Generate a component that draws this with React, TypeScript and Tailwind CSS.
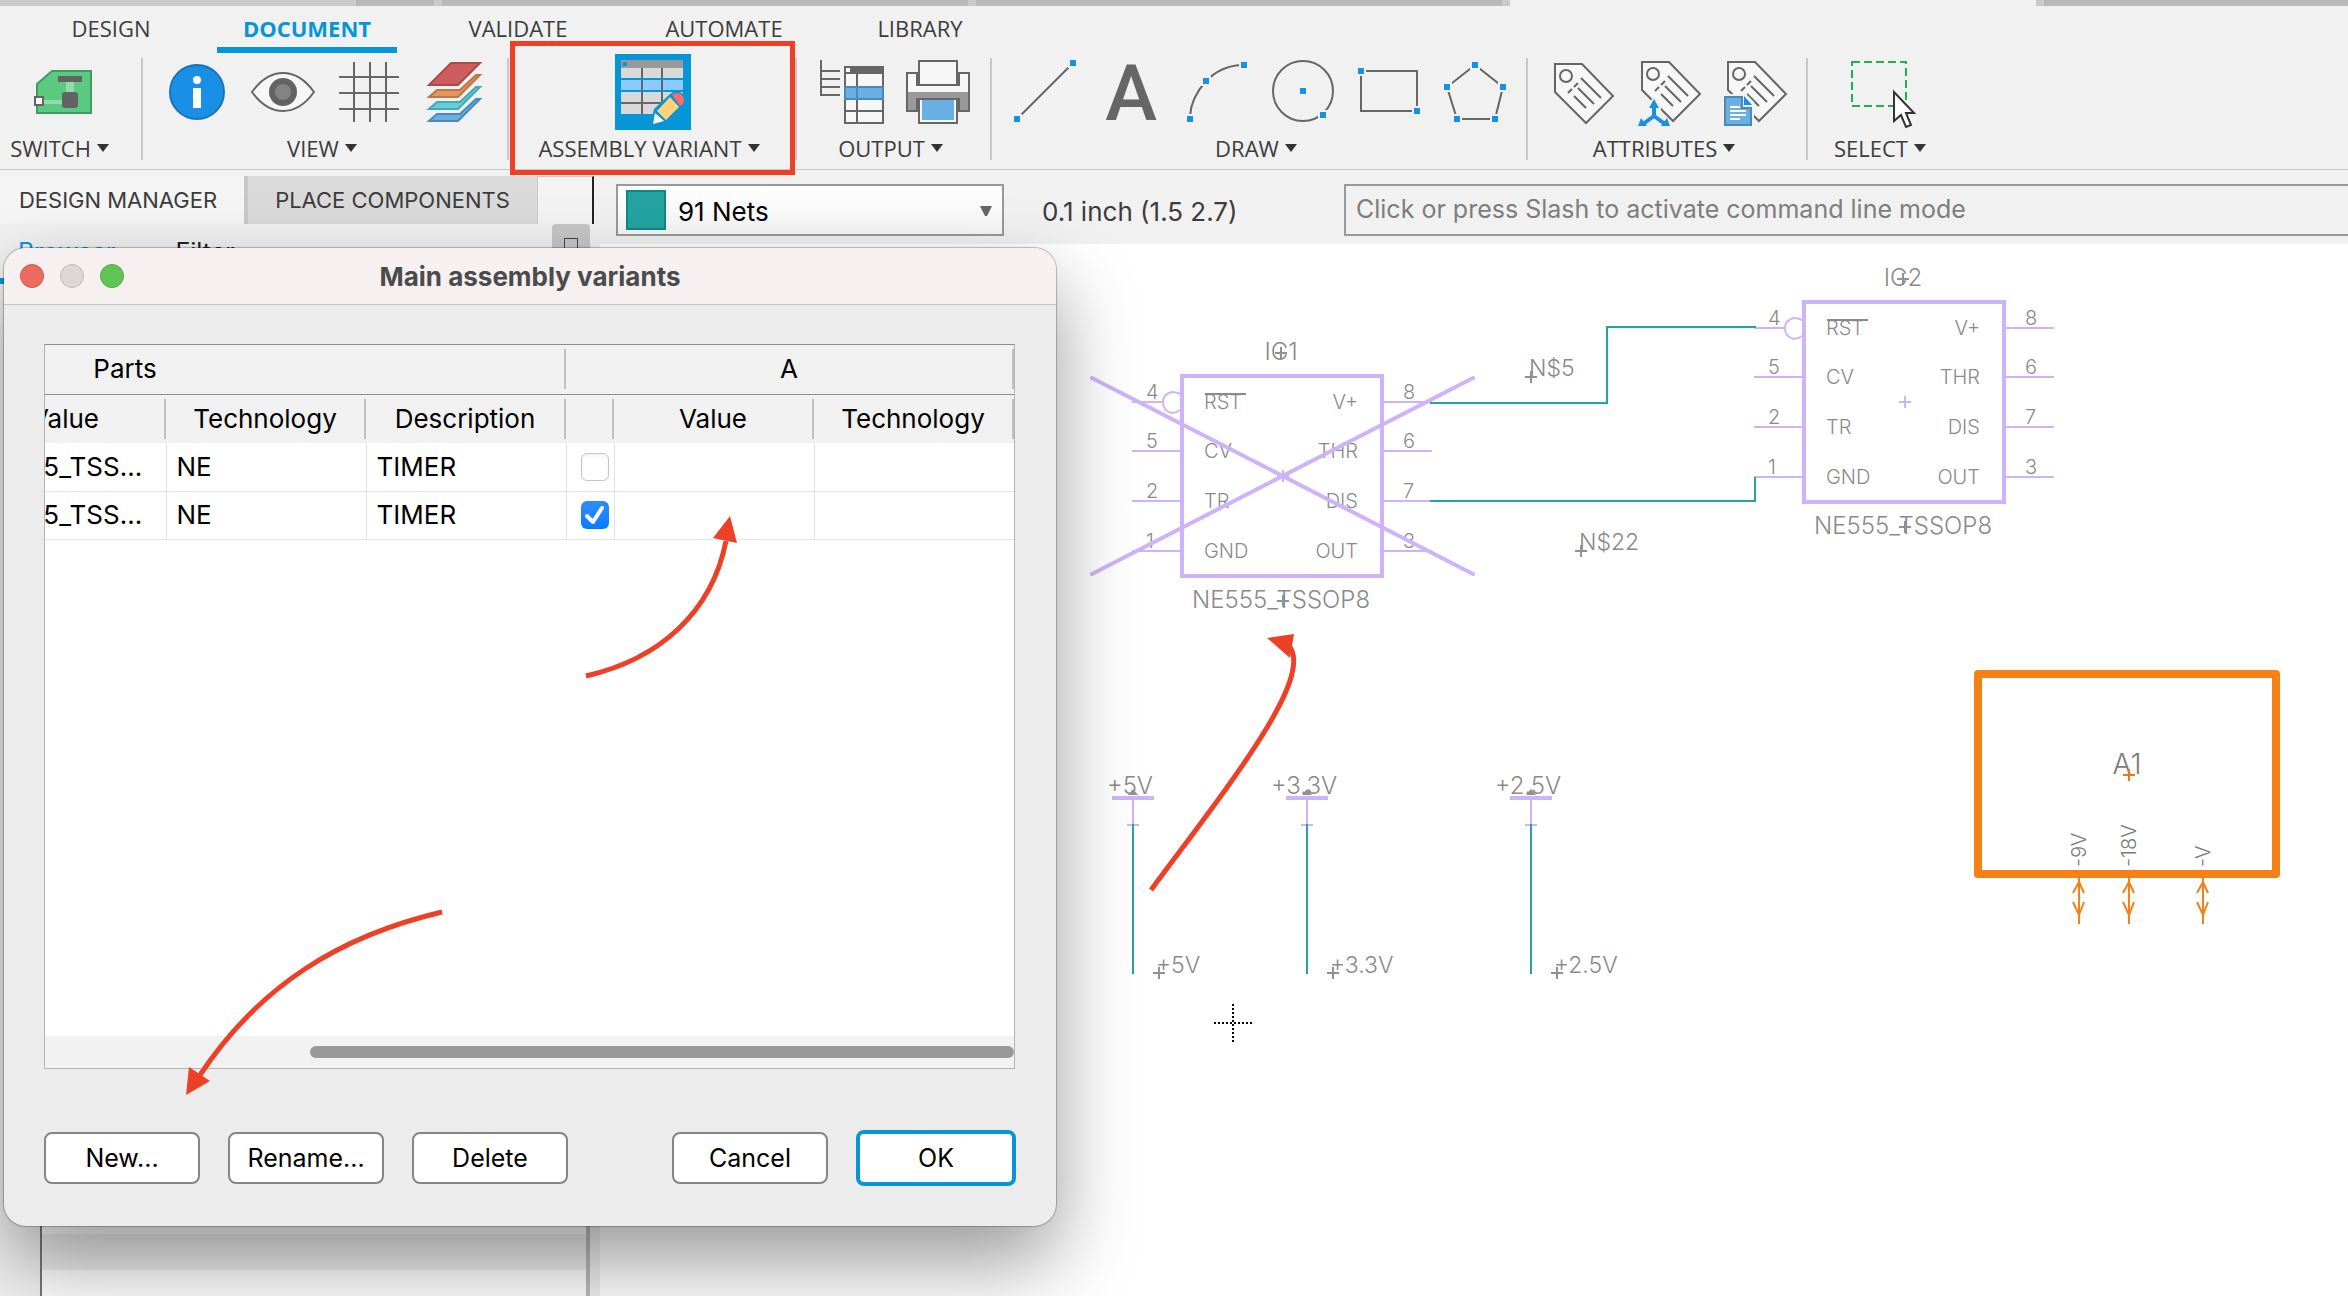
import type { ReactNode } from "react";

const IconBox = ({ children }: { children: ReactNode }) => (
  <svg width="76" height="76" viewBox="0 0 76 76" fill="none">
    {children}
  </svg>
);

/* Small blue drag handle with a clear margin around it */
const Handle = ({ x, y }: { x: number; y: number }) => (
  <>
    <rect x={x - 5} y={y - 5} width="10" height="10" fill="#f1f1f1" />
    <rect x={x - 3} y={y - 3} width="6" height="6" fill="#1a8fe6" />
  </>
);

const SwitchIcon = () => (
  <IconBox>
    <path d="M11 59V30L26 17H65V59Z" fill="#5bc97f" stroke="#3f9e5f" strokeWidth="2" />
    <path d="M40 28h8v12h-8zM18 46h20v4H18z" fill="#93dbab" />
    <rect x="32" y="22" width="24" height="6" fill="#636363" />
    <rect x="36" y="38" width="16" height="16" rx="3" fill="#636363" />
    <rect x="9" y="43" width="8" height="8" fill="#fff" stroke="#636363" strokeWidth="2" />
  </IconBox>
);

const InfoIcon = () => (
  <IconBox>
    <circle cx="38" cy="38" r="27" fill="#1a8fe6" stroke="#1a73ba" strokeWidth="2" />
    <circle cx="38" cy="26" r="4" fill="#fff" />
    <rect x="34" y="34" width="8" height="20" fill="#fff" />
  </IconBox>
);

const EyeIcon = () => (
  <IconBox>
    <path
      d="M7 38C17 24 28 19 38 19S59 24 69 38C59 52 48 57 38 57S17 52 7 38Z"
      fill="#f7f7f7"
      stroke="#666"
      strokeWidth="2"
    />
    <circle cx="38" cy="38" r="14" fill="#636363" />
    <circle cx="38" cy="38" r="8" fill="#838383" />
  </IconBox>
);

const GridIcon = () => (
  <IconBox>
    <path
      d="M23 8V68M39 8V68M55 8V68M8 23H68M8 39H68M8 55H68"
      stroke="#666"
      strokeWidth="2"
    />
  </IconBox>
);

const LayersIcon = () => (
  <IconBox>
    <path d="M12 31H41L63 9H34Z" fill="#cd5c5c" stroke="#a84a4c" strokeWidth="2" />
    <path d="M12 43H41L63 21H59L43 36H20Z" fill="#e5965f" stroke="#bd7645" strokeWidth="2" />
    <path d="M12 55H41L63 33H59L43 48H20Z" fill="#63cfd8" stroke="#45a9b2" strokeWidth="2" />
    <path d="M12 67H41L63 45H59L43 60H20Z" fill="#68afe6" stroke="#4a8ab8" strokeWidth="2" />
  </IconBox>
);

const VariantIcon = () => (
  <IconBox>
    <rect width="76" height="76" fill="#0696d7" />
    <rect x="6" y="6" width="62" height="8" fill="#999" />
    <rect x="8" y="8" width="4" height="4" fill="#0696d7" />
    <path d="M6 14h62v10H6zM6 38h62v22H6z" fill="#d9d9d9" />
    <rect x="6" y="26" width="62" height="10" fill="#8ccbff" />
    <path d="M27 14v10M27 26v10M27 38v22M47 14v10M47 26v10M47 38v22M6 49h62" stroke="#666" strokeWidth="2" />
    <path d="M34 76L39 55L55 40Q62 34 69 41V76Z" fill="#0696d7" />
    <path d="M57 41Q62 37 67 41Q71 46 67 51L65 52Z" fill="#ff6a6a" />
    <path d="M55 43L64 53L51 66L42 57Z" fill="#ffd37a" />
    <path d="M40 59L49 67L38 70Z" fill="#fff" />
  </IconBox>
);

const BomIcon = () => (
  <IconBox>
    <path d="M7 6V42M7 17H26M7 25H26M7 33H26M7 41H26" stroke="#666" strokeWidth="2" />
    <rect x="31" y="13" width="38" height="56" fill="#f7f7f7" stroke="#666" strokeWidth="2" />
    <rect x="30" y="12" width="40" height="8" fill="#666" />
    <rect x="32" y="14" width="4" height="4" fill="#fff" />
    <path d="M43 20V69M31 57H69" stroke="#666" strokeWidth="2" />
    <rect x="31" y="33" width="38" height="12" fill="#68afe6" stroke="#4a8ab8" strokeWidth="2" />
    <path d="M43 33v12" stroke="#4a8ab8" strokeWidth="2" />
  </IconBox>
);

const PrinterIcon = () => (
  <IconBox>
    <rect x="7" y="19" width="62" height="38" fill="#f7f7f7" stroke="#666" strokeWidth="2" />
    <rect x="8" y="38" width="60" height="18" fill="#999" />
    <path d="M16 18h44v14H16z" fill="#666" />
    <rect x="19" y="7" width="38" height="24" fill="#f7f7f7" stroke="#666" strokeWidth="2" />
    <path d="M16 44h44v14H16z" fill="#666" />
    <rect x="19" y="45" width="38" height="24" fill="#f7f7f7" stroke="#666" strokeWidth="2" />
    <rect x="22" y="46" width="32" height="20" fill="#68afe6" />
  </IconBox>
);

const LineIcon = () => (
  <IconBox>
    <path d="M10 65L66 9" stroke="#666" strokeWidth="2" />
    <Handle x={10} y={65} />
    <Handle x={66} y={9} />
  </IconBox>
);

const TextIcon = () => (
  <svg width="76" height="76" viewBox="0 0 76 76" className="overflow-visible">
    <text x="38" y="66" textAnchor="middle" className="fill-[#666] font-['Roboto'] text-[78px] font-medium">
      A
    </text>
  </svg>
);

const ArcIcon = () => (
  <IconBox>
    <path d="M11 62Q12 44 27 27Q42 12 62 11" stroke="#666" strokeWidth="2" />
    <Handle x={11} y={65} />
    <Handle x={27} y={27} />
    <Handle x={65} y={11} />
  </IconBox>
);

const CircleIcon = () => (
  <IconBox>
    <circle cx="38" cy="37" r="30" stroke="#666" strokeWidth="2" />
    <Handle x={38} y={37} />
    <Handle x={58} y={61} />
  </IconBox>
);

const RectIcon = () => (
  <IconBox>
    <rect x="10" y="17" width="56" height="40" stroke="#666" strokeWidth="2" />
    <Handle x={10} y={17} />
    <Handle x={66} y={57} />
  </IconBox>
);

const PolygonIcon = () => (
  <IconBox>
    <path d="M38 11L66 33L58 65H20L10 33Z" stroke="#666" strokeWidth="2" />
    <Handle x={38} y={11} />
    <Handle x={66} y={33} />
    <Handle x={58} y={65} />
    <Handle x={20} y={65} />
    <Handle x={10} y={33} />
  </IconBox>
);

const Tag = () => (
  <g stroke="#666" strokeWidth="2">
    <path d="M11 10H38L69 42L42 69L11 38Z" fill="#f7f7f7" />
    <circle cx="22" cy="22" r="6" />
    <path d="M37 24L57 44M34 34L50 50M30 42L42 54M34 29L30 33M28 35L24 39" />
  </g>
);

const TagIcon = () => (
  <IconBox>
    <Tag />
  </IconBox>
);

const TagGlobalIcon = () => (
  <IconBox>
    <g transform="translate(1 -2)">
      <Tag />
    </g>
    <path d="M24 42L31 52V60L43 70V76H5V70L17 60V52Z" fill="#f1f1f1" />
    <path d="M24 50V63M24 62L13 70M24 62L35 70" stroke="#1a8fe6" strokeWidth="4" />
    <path d="M24 45l5 9H19zM8 72l3-8 6 8zM40 72l-3-8-6 8z" fill="#1a8fe6" />
  </IconBox>
);

const TagTextIcon = () => (
  <IconBox>
    <g transform="translate(1 -2)">
      <Tag />
    </g>
    <path d="M6 40H30L38 48V74H6Z" fill="#f1f1f1" />
    <path d="M9 43H26V54H35V71H9Z" fill="#68afe6" stroke="#4a8ab8" strokeWidth="2" />
    <path d="M28 42L36 51H28Z" fill="#1a8fe6" />
    <path d="M14 53H24M14 57H30M14 61H30M14 65H24" stroke="#fff" strokeWidth="2" />
  </IconBox>
);

const SelectIcon = () => (
  <IconBox>
    <rect x="6" y="8" width="54" height="44" stroke="#22b14c" strokeWidth="2" strokeDasharray="8 4" />
    <path
      d="M48 38V67L55 61L60 73L65 71L60 59H68Z"
      fill="#fff"
      stroke="#333"
      strokeWidth="2"
    />
  </IconBox>
);

const tabs = [
  { label: "DESIGN", width: "w-[124px]" },
  { label: "DOCUMENT", width: "w-[180px]", active: true },
  { label: "VALIDATE", width: "w-[154px]" },
  { label: "AUTOMATE", width: "w-[170px]" },
  { label: "LIBRARY", width: "w-[134px]" },
];

const groups = [
  { label: "SWITCH", width: "w-[143px] pr-4", icons: [SwitchIcon] },
  { label: "VIEW", width: "w-[366px]", icons: [InfoIcon, EyeIcon, GridIcon, LayersIcon] },
  { label: "ASSEMBLY VARIANT", width: "w-[288px]", icons: [VariantIcon] },
  { label: "OUTPUT", width: "w-[195px]", icons: [BomIcon, PrinterIcon] },
  {
    label: "DRAW",
    width: "w-[536px]",
    icons: [LineIcon, TextIcon, ArcIcon, CircleIcon, RectIcon, PolygonIcon],
  },
  { label: "ATTRIBUTES", width: "w-[280px]", icons: [TagIcon, TagGlobalIcon, TagTextIcon] },
  { label: "SELECT", width: "w-[152px]", icons: [SelectIcon], last: true },
];

const WindowTabs = () => (
  <div className="flex h-1.5 gap-2 bg-[#cacaca]">
    <div className="w-[348px]" />
    <div className="w-[78px] bg-[#b9b9b9]" />
    <div className="w-[526px] bg-[#b9b9b9]" />
    <div className="w-[526px] bg-[#b9b9b9]" />
    <div className="w-[526px] bg-[#f1f1f1]" />
    <div className="flex-1 bg-[#b9b9b9]" />
  </div>
);

const Ribbon = () => (
  <header className="border-b border-[#c8c8c8] font-['Open_Sans',sans-serif] text-[22px] font-medium text-[#3c3c3c]">
    <nav className="flex h-12 gap-11 pl-[49px]">
      {tabs.map((tab) => (
        <a
          key={tab.label}
          href="#"
          className={`${tab.width} flex h-[47px] items-center justify-center border-b-6 pt-0.5 leading-none ${
            tab.active ? "border-[#0696d7] font-bold text-[#0696d7]" : "border-transparent"
          }`}
        >
          {tab.label}
        </a>
      ))}
    </nav>
    <div className="flex h-[115px]">
      {groups.map((group) => (
        <section
          key={group.label}
          className={`${group.width} relative flex shrink-0 flex-col items-center`}
        >
          <div className="flex gap-2.5">
            {group.icons.map((Icon, i) => (
              <button key={i} type="button" aria-label={group.label}>
                <Icon />
              </button>
            ))}
          </div>
          <button type="button" className="flex h-9 items-center gap-1.5 pr-2 leading-none">
            {group.label}
            <svg width="12" height="8" viewBox="0 0 12 8">
              <path d="M0 0H12L6 8Z" fill="#333" />
            </svg>
          </button>
          {!group.last && <span className="absolute right-0 top-1 h-[102px] w-0.5 bg-[#c8c8c8]" />}
        </section>
      ))}
    </div>
  </header>
);

const SidePanel = () => (
  <aside className="flex w-[600px] shrink-0 flex-col bg-[#f1f1f1]">
    <div className="flex h-12 text-[22px] leading-none text-[#3c3c3c]">
      <button type="button" className="w-[244px] bg-[#f5f5f5] pr-2">
        DESIGN MANAGER
      </button>
      <button type="button" className="w-[294px] border-l-4 border-r border-[#c8c8c8] bg-[#dadada]">
        PLACE COMPONENTS
      </button>
      <div className="w-14 border-r-2 border-t border-r-[#222] border-t-[#c8c8c8] bg-[#f3f3f3]" />
    </div>
    <div className="flex h-[54px] items-start justify-between pl-[18px] pr-2.5 text-[25px] leading-7">
      <div className="flex gap-15 pt-3.5">
        <a href="#" className="text-[#0696d7]">
          Browser
        </a>
        <a href="#" className="text-[#222]">
          Filter
        </a>
      </div>
      <span className="flex h-10 w-[38px] justify-center rounded-t bg-[#c6c6c6] pt-3.5">
        <span className="h-5 w-3.5 border border-[#444]" />
      </span>
    </div>
    <div className="h-1.5 w-[120px] bg-[#0696d7]" />
    <div className="ml-10 mr-2.5 flex flex-1 flex-col justify-end border-l-2 border-r-4 border-l-[#777] border-r-[#bbb] bg-white">
      <div className="h-9 bg-[#f0f0f0]" />
      <div className="h-[26px]" />
    </div>
  </aside>
);

const CommandBar = () => (
  <div className="flex h-[68px] items-start pl-4 pt-2 text-[26px] text-[#3c3c3c]">
    <div className="relative h-[52px] w-[388px] border-2 border-[#999] bg-linear-to-b from-white to-[#f6f6f6]">
      <span className="absolute left-2 top-1 h-10 w-10 border-2 border-[#0b8989] bg-[#24a3a0]" />
      <select
        aria-label="Layer"
        className="h-full w-full appearance-none bg-transparent pl-[60px] pt-0.5 text-black outline-none"
      >
        <option>91 Nets</option>
      </select>
      <svg className="absolute right-2.5 top-5" width="12" height="10" viewBox="0 0 12 10">
        <path d="M0 0H12L7 10H5Z" fill="#666" />
      </svg>
    </div>
    <span className="ml-[38px] w-[302px] pt-0.5 leading-[52px]">0.1 inch (1.5 2.7)</span>
    <input
      type="text"
      aria-label="Command line"
      placeholder="Click or press Slash to activate command line mode"
      className="h-[52px] min-w-0 flex-1 border-2 border-r-0 border-[#999] bg-[#f1f1f1] px-2.5 pb-0.5 text-[25px] outline-none placeholder:text-[#7d7d7d]"
    />
  </div>
);

const Cross = ({ x, y, color = "#919191" }: { x: number; y: number; color?: string }) => (
  <path d={`M${x - 6} ${y}H${x + 6}M${x} ${y - 6}V${y + 6}`} stroke={color} strokeWidth="2" />
);

const pins = [
  { y: 402, left: "4", leftName: "RST", right: "8", rightName: "V+" },
  { y: 451, left: "5", leftName: "CV", right: "6", rightName: "THR" },
  { y: 501, left: "2", leftName: "TR", right: "7", rightName: "DIS" },
  { y: 551, left: "1", leftName: "GND", right: "3", rightName: "OUT" },
];

const Timer = ({ name, crossed }: { name: string; crossed?: boolean }) => (
  <g>
    <g fill="#8a8a8a" fontSize="20">
      {pins.map((pin) => (
        <g key={pin.left}>
          <text x="1146" y={pin.y - 3}>{pin.left}</text>
          <text x="1403" y={pin.y - 3}>{pin.right}</text>
          <text x="1204" y={pin.y + 7}>{pin.leftName}</text>
          <text x="1358" y={pin.y + 7} textAnchor="end">{pin.rightName}</text>
        </g>
      ))}
      <path d="M1205 393h41v2h-41z" />
    </g>
    <g fill="#8a8a8a" fontSize="24">
      <text x="1281" y="360" textAnchor="middle">{name}</text>
      <text x="1281" y="608" textAnchor="middle">NE555_TSSOP8</text>
    </g>
    <Cross x={1281} y={353} />
    <Cross x={1283} y={601} />
    <g stroke="#cfb3fa" strokeWidth="2" fill="none">
      <path d="M1132 402H1162M1132 451H1180M1132 501H1180M1132 551H1180M1384 402H1432M1384 451H1432M1384 501H1432M1384 551H1432" />
      <path d="M1180 394Q1176 392 1172 392Q1163 394 1163 402Q1163 411 1172 413Q1176 413 1180 410" />
      <rect x="1182" y="376" width="200" height="200" strokeWidth="4" />
      {crossed && <path d="M1092 378L1473 574M1092 574L1473 378" strokeWidth="4" strokeLinecap="round" />}
    </g>
    <Cross x={1283} y={476} color="#cfb3fa" />
  </g>
);

const Supply = ({ x, label }: { x: number; label: string }) => (
  <g>
    <g fill="#8a8a8a">
      <text x={x - 3} y="794" fontSize="24" textAnchor="middle">{label}</text>
      <text x={x + 23} y="973" fontSize="23">{label}</text>
    </g>
    <path d={`M${x - 5} 795L${x} 789L${x + 5} 795Z`} fill="#919191" />
    <Cross x={x + 26} y={973} />
    <path d={`M${x - 21} 798H${x + 21}`} stroke="#cfb3fa" strokeWidth="4" />
    <path d={`M${x} 798V825M${x - 6} 825H${x + 6}`} stroke="#cfb3fa" strokeWidth="2" />
    <path d={`M${x} 824V974`} stroke="#24a3a0" strokeWidth="2" />
  </g>
);

const terminals = [
  { x: 2079, label: "-9V" },
  { x: 2129, label: "-18V" },
  { x: 2203, label: "-V" },
];

const Schematic = () => (
  <svg
    viewBox="600 244 1748 1052"
    preserveAspectRatio="xMinYMin slice"
    className="block w-full flex-1 bg-white font-['Inter',sans-serif] font-light"
    fill="none"
  >
    <Timer name="IC1" crossed />
    <g transform="translate(622 -74)">
      <Timer name="IC2" />
    </g>
    <g stroke="#24a3a0" strokeWidth="2">
      <path d="M1430 403H1607V327H1756" />
      <path d="M1430 501H1755V477" />
    </g>
    <g fill="#8a8a8a" fontSize="23">
      <text x="1529" y="376">N$5</text>
      <text x="1579" y="550">N$22</text>
    </g>
    <Cross x={1531} y={377} />
    <Cross x={1581} y={551} />

    <Supply x={1133} label="+5V" />
    <Supply x={1307} label="+3.3V" />
    <Supply x={1531} label="+2.5V" />

    {/* Battery block */}
    <rect x="1978" y="674" width="298" height="200" stroke="#f67f16" strokeWidth="8" strokeLinejoin="round" />
    <text x="2127" y="774" textAnchor="middle" fill="#7a7a7a" fontSize="28">A1</text>
    <Cross x={2129} y={775} color="#e8791a" />
    {terminals.map(({ x, label }) => (
      <g key={x}>
        <text transform={`translate(${x + 7} 867) rotate(-90)`} fill="#7a7a7a" fontSize="20">
          {label}
        </text>
        <path
          d={`M${x} 878V924M${x - 6} 893L${x} 882L${x + 5} 893M${x - 6} 902L${x} 915L${x + 5} 902`}
          stroke="#f67f16"
          strokeWidth="2"
          strokeDasharray="46 0 8 2"
        />
      </g>
    ))}

    {/* Crosshair cursor */}
    <path d="M1214 1023H1253M1233 1004V1043" stroke="#000" strokeWidth="2" strokeDasharray="2 2" />
  </svg>
);

const columns = ["", "Value", "Technology", "Description", "", "Value", "Technology"];

const rows = [
  { value: "NE555_TSS...", technology: "NE", description: "TIMER", checked: false },
  { value: "NE555_TSS...", technology: "NE", description: "TIMER", checked: true },
];

const VariantTable = () => (
  <div className="mr-px flex h-[725px] flex-col overflow-hidden border border-t-[#8c8c8c] border-x-[#b4b4b4] border-b-[#b4b4b4] bg-white">
    <div className="flex-1 overflow-hidden">
      <table className="-ml-[359px] w-[1328px] table-fixed border-collapse text-left">
        <colgroup>
          <col className="w-[280px]" />
          <col className="w-[200px]" />
          <col className="w-[200px]" />
          <col className="w-[200px]" />
          <col className="w-12" />
          <col className="w-[200px]" />
          <col className="w-[200px]" />
        </colgroup>
        <thead className="bg-[#f1f1f1] text-center">
          <tr className="h-[49px] border-b border-[#8c8c8c]">
            <th colSpan={4} className="p-0 font-normal">
              <div className="h-10 border-r-2 border-[#c0c0c0] leading-10">Parts</div>
            </th>
            <th colSpan={3} className="p-0 font-normal">
              <div className="h-10 border-r-2 border-[#c0c0c0] leading-10">A</div>
            </th>
          </tr>
          <tr className="h-[49px]">
            {columns.map((column, i) => (
              <th key={i} className="p-0 font-normal">
                <div className="h-10 border-r-2 border-[#c0c0c0] leading-10">{column}</div>
              </th>
            ))}
          </tr>
        </thead>
        <tbody>
          {rows.map((row, i) => (
            <tr key={i} className="h-12 border-b border-[#e2e2e2] leading-8">
              <td className="border-r border-[#e2e2e2]" />
              <td className="whitespace-nowrap border-r border-[#e2e2e2] px-2.5 py-0">{row.value}</td>
              <td className="border-r border-[#e2e2e2] px-2.5 py-0">{row.technology}</td>
              <td className="border-r border-[#e2e2e2] px-2.5 py-0">{row.description}</td>
              <td className="border-r border-[#e2e2e2] py-0 pl-3.5">
                <label className="relative block h-7 w-7">
                  <input
                    type="checkbox"
                    aria-label={`Populate part ${i + 1}`}
                    defaultChecked={row.checked}
                    className="peer block h-7 w-7 appearance-none rounded-md border border-[#c4c4c4] bg-white shadow-inner checked:border-0 checked:bg-linear-to-b checked:from-[#2f8fff] checked:to-[#057aff]"
                  />
                  <svg
                    className="pointer-events-none absolute inset-0 hidden peer-checked:block"
                    viewBox="0 0 28 28"
                    fill="none"
                  >
                    <path
                      d="M6 15L12 21L21 7"
                      stroke="#fff"
                      strokeWidth="4"
                      strokeLinecap="round"
                      strokeLinejoin="round"
                    />
                  </svg>
                </label>
              </td>
              <td className="border-r border-[#e2e2e2]" />
              <td className="border-r border-[#e2e2e2]" />
            </tr>
          ))}
        </tbody>
      </table>
    </div>
    <div className="flex h-8 items-center justify-end bg-[#f2f2f2]">
      <div className="h-3 w-[704px] rounded-full bg-[#999]" />
    </div>
  </div>
);

const DialogButton = ({ children }: { children: ReactNode }) => (
  <button type="button" className="h-[52px] w-[156px] rounded-lg border-2 border-[#858585] bg-white pt-0.5">
    {children}
  </button>
);

const VariantDialog = () => (
  <div
    role="dialog"
    aria-label="Main assembly variants"
    className="absolute left-1 top-[248px] w-[1052px] rounded-[22px] bg-[#ececec] text-[26px] text-black shadow-[0_36px_80px_rgba(0,0,0,0.4),0_0_1px_1px_rgba(0,0,0,0.25)]"
  >
    <div className="relative flex h-[57px] items-center justify-center rounded-t-[22px] border-b border-[#c6c6c6] bg-[#f6f0f0]">
      <div className="absolute left-4 flex gap-4">
        <button type="button" aria-label="Close" className="h-6 w-6 rounded-full border border-[#d35549] bg-[#ed6a5e]" />
        <button type="button" aria-label="Minimize" className="h-6 w-6 rounded-full border border-[#c0bbbb] bg-[#ddd7d7]" />
        <button type="button" aria-label="Zoom" className="h-6 w-6 rounded-full border border-[#52a843] bg-[#61c554]" />
      </div>
      <h2 className="font-bold text-[#4b4b4b]">Main assembly variants</h2>
    </div>
    <div className="px-10 pb-10 pt-[39px]">
      <VariantTable />
      <div className="mt-[61px] flex items-center gap-7 text-[25px]">
        <DialogButton>New...</DialogButton>
        <DialogButton>Rename...</DialogButton>
        <DialogButton>Delete</DialogButton>
        <span className="flex-1" />
        <DialogButton>Cancel</DialogButton>
        <button type="button" className="h-14 w-40 rounded-lg border-4 border-[#0696d7] bg-white pt-0.5">
          OK
        </button>
      </div>
    </div>
  </div>
);

/* Red callouts drawn over the whole window */
const Callouts = () => (
  <svg
    className="pointer-events-none absolute left-0 top-0"
    width="1400"
    height="1296"
    viewBox="0 0 1400 1296"
    fill="none"
    stroke="#ee4026"
    strokeWidth="5"
  >
    <rect x="512.5" y="43.5" width="280" height="129" />
    <path d="M586 676C660 659 712 612 726 541" />
    <path d="M442 912C340 936 260 985 200 1075" />
    <path d="M1151 890C1225 790 1318 675 1288 645" />
    <g fill="#ee4026" stroke="none">
      <path d="M730 516L713 538L737 543Z" />
      <path d="M186 1095L189 1067L210 1081Z" />
      <path d="M1267 638L1294 634L1290 658Z" />
    </g>
  </svg>
);

const App = () => {
  return (
    <div className="relative flex min-h-screen flex-col overflow-hidden bg-[#f1f1f1] font-['Inter',sans-serif]">
      <WindowTabs />
      <Ribbon />
      <main className="flex flex-1 pt-1.5">
        <SidePanel />
        <div className="flex min-w-0 flex-1 flex-col">
          <CommandBar />
          <Schematic />
        </div>
      </main>
      <VariantDialog />
      <Callouts />
    </div>
  );
};

export default App;
